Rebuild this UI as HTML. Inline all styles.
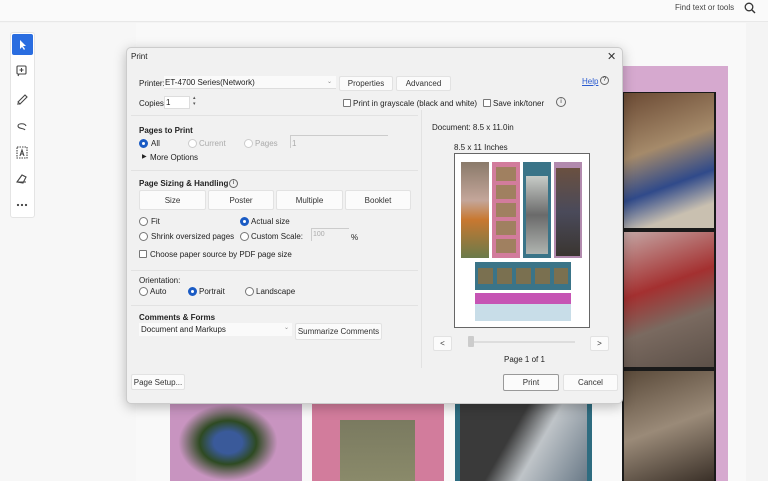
<!DOCTYPE html>
<html><head><style>
*{box-sizing:border-box;margin:0;padding:0}
body{width:768px;height:481px;overflow:hidden;background:#f4f4f4;font-family:"Liberation Sans",sans-serif;font-size:8px;color:#222;position:relative}
.a{position:absolute}
.btn{position:absolute;background:#fbfbfb;border:1px solid #e2e2e2;border-radius:2px;text-align:center;font-size:8px;color:#333}
.rad{position:absolute;width:9px;height:9px;border:1px solid #777;border-radius:50%;background:#fff}
.rad.on{border:3px solid #1a5bc4}
.rad.dis{border-color:#ccc}
.chk{position:absolute;width:8px;height:8px;border:1px solid #777;background:#fff;border-radius:1px}
.t{position:absolute;white-space:nowrap;font-size:8px}
.h{font-weight:bold;color:#222}
.sep{position:absolute;height:1px;background:#e2e2e2}
</style></head><body>
<div class="a" style="left:0;top:0;width:768px;height:22px;background:#fafafa;border-bottom:1px solid #e8e8e8"></div>
<div class="t" style="left:675px;top:3px;color:#444">Find text or tools</div>
<svg class="a" style="left:744px;top:2px" width="12" height="12"><circle cx="5" cy="5" r="3.8" fill="none" stroke="#333" stroke-width="1.3"/><path d="M8 8l3 3" stroke="#333" stroke-width="1.4"/></svg>
<div class="a" style="left:0;top:23px;width:136px;height:458px;background:#f7f7f7"></div>
<div class="a" style="left:136px;top:23px;width:610px;height:458px;background:#f9f9f9"></div>
<div class="a" style="left:10px;top:32px;width:25px;height:186px;background:#fff;border:1px solid #e4e4e4;border-radius:3px"></div>
<div class="a" style="left:12px;top:34px;width:21px;height:21px;background:#2a6de0;border-radius:2px"></div>
<svg class="a" style="left:12px;top:34px" width="21" height="21"><path d="M8 6v9l2-2 2 3 1-1-2-3h3z" fill="#fff"/></svg>
<svg class="a" style="left:12px;top:60px" width="21" height="160" fill="none" stroke="#444" stroke-width="1.1">
<rect x="5" y="6" width="9" height="8" rx="1"/><path d="M9.5 8v4M7.5 10h4M7 14l-1 2"/>
<path d="M6 42l7-7 2 2-7 7zM5 44h3"/>
<path d="M14 66c-1-3-8-3-8 0 0 3 6 2 7 4" />
<rect x="5" y="87" width="10" height="11" stroke-dasharray="1.5 1"/><path d="M8 96l2-6 2 6M9 94h2"/>
<path d="M5 122l5-7 4 2-3 6zM5 122h9"/>
<circle cx="6" cy="145" r=".6" fill="#444"/><circle cx="10" cy="145" r=".6" fill="#444"/><circle cx="14" cy="145" r=".6" fill="#444"/>
</svg>
<!-- background page pieces -->
<div class="a" style="left:622px;top:66px;width:106px;height:415px;background:#d6a9cf"></div>
<div class="a" style="left:622px;top:92px;width:94px;height:389px;background:#1a1a1a"></div>
<div class="a" style="left:624px;top:93px;width:90px;height:135px;background:linear-gradient(160deg,#6b4a34,#a58a6a 40%,#304a8a 65%,#c9c0b0 85%)"></div>
<div class="a" style="left:624px;top:232px;width:90px;height:135px;background:linear-gradient(160deg,#c4a6a4,#a43030 40%,#7a6a60 65%,#5c5048)"></div>
<div class="a" style="left:624px;top:371px;width:90px;height:110px;background:linear-gradient(160deg,#5a4a3a,#9a8a78 50%,#3a3028)"></div>
<div class="a" style="left:170px;top:404px;width:132px;height:77px;background:#c894c0"></div>
<div class="a" style="left:178px;top:404px;width:100px;height:77px;background:radial-gradient(ellipse at 50% 50%,#3a5a9a 20%,#2e4a22 40%,#c894c0 70%)"></div>
<div class="a" style="left:312px;top:404px;width:132px;height:77px;background:#d27c9c"></div>
<div class="a" style="left:340px;top:420px;width:75px;height:61px;background:linear-gradient(#7a7a60,#8a8a6a);"></div>
<div class="a" style="left:455px;top:404px;width:137px;height:77px;background:#2e6c80"></div>
<div class="a" style="left:460px;top:404px;width:127px;height:77px;background:linear-gradient(120deg,#3a3a3a 40%,#bfc4c8 60%,#6a7a88)"></div>
<!-- dialog -->
<div class="a" style="left:126px;top:47px;width:497px;height:357px;background:#f1f1f1;border:1px solid #ccc;border-radius:5px;box-shadow:0 3px 12px rgba(0,0,0,.25)"></div>
<div class="t" style="left:131px;top:52px">Print</div>
<div class="t" style="left:607px;top:50px;font-size:11px;color:#333">✕</div>
<div class="t" style="left:139px;top:79px">Printer:</div>
<div class="a" style="left:164px;top:76px;width:172px;height:13px;background:#fafafa;border-bottom:1px solid #ddd"></div>
<div class="t" style="left:165px;top:78px">ET-4700 Series(Network)</div>
<div class="t" style="left:327px;top:78px;font-size:6px;color:#888">⌄</div>
<div class="btn" style="left:339px;top:76px;width:54px;height:15px;line-height:14px">Properties</div>
<div class="btn" style="left:396px;top:76px;width:55px;height:15px;line-height:14px">Advanced</div>
<div class="t" style="left:582px;top:77px;color:#2a5bd0;text-decoration:underline">Help</div>
<div class="a" style="left:600px;top:76px;width:9px;height:9px;border:1px solid #666;border-radius:50%;font-size:6px;text-align:center;line-height:7px">?</div>
<div class="t" style="left:139px;top:99px">Copies:</div>
<div class="a" style="left:164px;top:96px;width:26px;height:13px;background:#fff;border:1px solid #ddd"></div>
<div class="t" style="left:166px;top:98px">1</div>
<div class="t" style="left:193px;top:95px;font-size:5px;line-height:6px;color:#555">▴<br>▾</div>
<div class="chk" style="left:343px;top:99px"></div>
<div class="t" style="left:353px;top:99px">Print in grayscale (black and white)</div>
<div class="chk" style="left:483px;top:99px"></div>
<div class="t" style="left:493px;top:99px">Save ink/toner</div>
<div class="a" style="left:556px;top:97px;width:10px;height:10px;border:1px solid #666;border-radius:50%;font-size:6px;text-align:center;line-height:8px">i</div>
<div class="sep" style="left:131px;top:115px;width:287px"></div>
<div class="t h" style="left:139px;top:126px">Pages to Print</div>
<div class="rad on" style="left:139px;top:139px"></div><div class="t" style="left:151px;top:139px">All</div>
<div class="rad dis" style="left:188px;top:139px"></div><div class="t" style="left:199px;top:139px;color:#aaa">Current</div>
<div class="rad dis" style="left:244px;top:139px"></div><div class="t" style="left:255px;top:139px;color:#aaa">Pages</div>
<div class="a" style="left:290px;top:135px;width:98px;height:13px;border-left:1px solid #ccc;border-top:1px solid #ccc"></div>
<div class="t" style="left:292px;top:139px;color:#aaa">1</div>
<div class="t" style="left:142px;top:153px;font-size:6px">▶</div><div class="t" style="left:150px;top:153px">More Options</div>
<div class="sep" style="left:131px;top:170px;width:287px"></div>
<div class="t h" style="left:139px;top:179px">Page Sizing &amp; Handling</div>
<div class="a" style="left:229px;top:179px;width:9px;height:9px;border:1px solid #666;border-radius:50%;font-size:6px;text-align:center;line-height:7px">i</div>
<div class="btn" style="left:139px;top:190px;width:67px;height:20px;line-height:19px">Size</div>
<div class="btn" style="left:208px;top:190px;width:66px;height:20px;line-height:19px">Poster</div>
<div class="btn" style="left:276px;top:190px;width:67px;height:20px;line-height:19px">Multiple</div>
<div class="btn" style="left:345px;top:190px;width:66px;height:20px;line-height:19px">Booklet</div>
<div class="rad" style="left:139px;top:217px"></div><div class="t" style="left:151px;top:217px">Fit</div>
<div class="rad on" style="left:240px;top:217px"></div><div class="t" style="left:251px;top:217px">Actual size</div>
<div class="rad" style="left:139px;top:232px"></div><div class="t" style="left:151px;top:232px">Shrink oversized pages</div>
<div class="rad" style="left:240px;top:232px"></div><div class="t" style="left:251px;top:232px">Custom Scale:</div>
<div class="a" style="left:311px;top:228px;width:38px;height:13px;border-left:1px solid #ccc;border-top:1px solid #ccc"></div>
<div class="t" style="left:313px;top:231px;color:#aaa;font-size:7px">100</div>
<div class="t" style="left:351px;top:233px">%</div>
<div class="chk" style="left:139px;top:250px"></div>
<div class="t" style="left:150px;top:250px">Choose paper source by PDF page size</div>
<div class="sep" style="left:131px;top:270px;width:287px"></div>
<div class="t" style="left:139px;top:276px">Orientation:</div>
<div class="rad" style="left:139px;top:287px"></div><div class="t" style="left:150px;top:287px">Auto</div>
<div class="rad on" style="left:188px;top:287px"></div><div class="t" style="left:199px;top:287px">Portrait</div>
<div class="rad" style="left:245px;top:287px"></div><div class="t" style="left:256px;top:287px">Landscape</div>
<div class="sep" style="left:131px;top:305px;width:287px"></div>
<div class="t h" style="left:139px;top:313px">Comments &amp; Forms</div>
<div class="a" style="left:139px;top:323px;width:153px;height:13px;background:#fafafa"></div>
<div class="t" style="left:141px;top:325px">Document and Markups</div>
<div class="t" style="left:284px;top:324px;font-size:6px;color:#888">⌄</div>
<div class="btn" style="left:295px;top:323px;width:87px;height:17px;line-height:16px">Summarize Comments</div>
<div class="btn" style="left:131px;top:374px;width:54px;height:16px;line-height:15px">Page Setup...</div>
<div class="sep" style="left:421px;top:110px;width:1px;height:258px"></div>
<div class="t" style="left:432px;top:123px">Document: 8.5 x 11.0in</div>
<div class="t" style="left:454px;top:143px">8.5 x 11 Inches</div>
<div class="a" style="left:454px;top:153px;width:136px;height:175px;background:#fff;border:1px solid #666"></div>
<div class="a" style="left:461px;top:162px;width:28px;height:96px;background:linear-gradient(#8a7a6a,#c4a69a 40%,#c87830 60%,#6a7a4a)"></div>
<div class="a" style="left:492px;top:162px;width:28px;height:96px;background:#d27c9c"></div>
<div class="a" style="left:496px;top:167px;width:20px;height:86px;background:repeating-linear-gradient(#a08060 0 14px,#d27c9c 14px 18px)"></div>
<div class="a" style="left:523px;top:162px;width:28px;height:96px;background:#3a7488"></div>
<div class="a" style="left:526px;top:176px;width:22px;height:78px;background:linear-gradient(#c8ccc8,#6a6a6a 50%,#b0b4b0)"></div>
<div class="a" style="left:554px;top:162px;width:28px;height:96px;background:#b28aae"></div>
<div class="a" style="left:556px;top:168px;width:24px;height:88px;background:linear-gradient(#6a5040,#4a4a5a 50%,#3a3530)"></div>
<div class="a" style="left:475px;top:262px;width:96px;height:28px;background:#3a7488"></div>
<div class="a" style="left:478px;top:268px;width:90px;height:16px;background:repeating-linear-gradient(90deg,#7a7050 0 15px,#3a7488 15px 19px)"></div>
<div class="a" style="left:475px;top:293px;width:96px;height:28px;background:linear-gradient(#c654b4 40%,#c8dde8 40%)"></div>
<div class="btn" style="left:433px;top:336px;width:19px;height:15px;line-height:14px">&lt;</div>
<div class="btn" style="left:590px;top:336px;width:19px;height:15px;line-height:14px">&gt;</div>
<div class="a" style="left:470px;top:341px;width:105px;height:2px;background:#ddd"></div>
<div class="a" style="left:468px;top:336px;width:6px;height:11px;background:#ccc;border-radius:1px"></div>
<div class="t" style="left:504px;top:355px">Page 1 of 1</div>
<div class="btn" style="left:503px;top:374px;width:56px;height:17px;line-height:16px;border-color:#999">Print</div>
<div class="btn" style="left:563px;top:374px;width:55px;height:17px;line-height:16px">Cancel</div>
</body></html>
